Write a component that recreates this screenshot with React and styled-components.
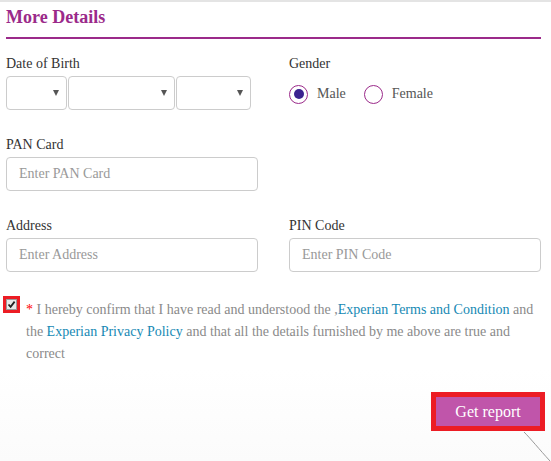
import React from "react";
import styled, { createGlobalStyle } from "styled-components";

const GlobalStyle = createGlobalStyle`
  html, body { margin: 0; padding: 0; background: #ffffff; }
  body { font-family: "Liberation Serif", "Times New Roman", serif; }
  * { box-sizing: border-box; }
`;

const PURPLE = "#9b2a8a";

const Page = styled.div`
  position: relative;
  min-height: 461px;
  overflow: hidden;
  border-top: 2px solid #e4e4e4;
  padding: 0 10px 0 6px;
  background: linear-gradient(180deg, #ffffff 0%, #ffffff 80%, #fbfbfb 100%);
`;

const Title = styled.h2`
  margin: 0;
  padding: 3px 0 8px;
  font-size: 18px;
  line-height: 24px;
  font-weight: bold;
  color: ${PURPLE};
  border-bottom: 2px solid ${PURPLE};
`;

const Grid = styled.div`
  display: grid;
  grid-template-columns: 252px 252px;
  column-gap: 31px;
  row-gap: 25px;
  margin-top: 15px;
`;

const Field = styled.div`
  display: flex;
  flex-direction: column;
`;

const Label = styled.label`
  font-size: 14px;
  line-height: 20px;
  color: #333333;
  margin-bottom: 2px;
`;

const Input = styled.input`
  height: 34px;
  width: 100%;
  border: 1px solid #cccccc;
  border-radius: 4px;
  padding: 0 12px;
  font-family: "Liberation Serif", "Times New Roman", serif;
  font-size: 14px;
  color: #333;
  outline: none;
  background: #fff;
  &::placeholder { color: #999999; }
`;

const SelectRow = styled.div`
  display: flex;
  gap: 1px;
`;

const SelectWrap = styled.div`
  position: relative;
  width: ${(p) => p.$w}px;
  height: 34px;
  &::after {
    content: "";
    position: absolute;
    right: 8px;
    top: 14px;
    border-left: 3.5px solid transparent;
    border-right: 3.5px solid transparent;
    border-top: 6px solid #555555;
    pointer-events: none;
  }
`;

const Select = styled.select`
  appearance: none;
  width: 100%;
  height: 100%;
  border: 1px solid #cccccc;
  border-radius: 4px;
  background: #fff;
  font-family: "Liberation Serif", "Times New Roman", serif;
  font-size: 14px;
  padding: 0 8px;
  outline: none;
`;

const RadioGroup = styled.div`
  display: flex;
  align-items: center;
  height: 34px;
  gap: 18px;
  padding-top: 2px;
`;

const RadioOption = styled.label`
  display: flex;
  align-items: center;
  gap: 9px;
  font-size: 14px;
  color: #555555;
  cursor: pointer;
`;

const RadioCircle = styled.span`
  width: 19px;
  height: 19px;
  border-radius: 50%;
  border: 1.5px solid ${PURPLE};
  display: flex;
  align-items: center;
  justify-content: center;
  background: #fff;
  &::after {
    content: "";
    width: 10px;
    height: 10px;
    border-radius: 50%;
    background: ${(p) => (p.$checked ? "#3b2390" : "transparent")};
  }
`;

const Consent = styled.div`
  display: flex;
  align-items: flex-start;
  gap: 6px;
  margin-top: 24px;
  margin-left: -3px;
`;

const CheckBox = styled.span`
  flex: none;
  width: 17px;
  height: 17px;
  background: #ec1c24;
  display: flex;
  align-items: center;
  justify-content: center;
`;

const CheckInner = styled.span`
  width: 11px;
  height: 11px;
  background: #e9e9e9;
  border: 1px solid #9a9a9a;
  display: flex;
  align-items: center;
  justify-content: center;
`;

const ConsentText = styled.p`
  margin: 0;
  padding-top: 3px;
  font-size: 14px;
  line-height: 22px;
  color: #8a8a8a;
`;

const Star = styled.span`
  color: #ff0000;
`;

const Link = styled.a`
  color: #1689b4;
  text-decoration: none;
`;

const ButtonRow = styled.div`
  display: flex;
  justify-content: flex-end;
  margin-top: 27px;
  margin-right: -4px;
`;

const Button = styled.button`
  width: 114px;
  height: 39px;
  border: 5px solid #ec1c24;
  background: #c055aa;
  color: #ffffff;
  font-family: "Liberation Serif", "Times New Roman", serif;
  font-size: 16px;
  padding: 0;
  cursor: pointer;
`;

const Twig = styled.svg`
  position: absolute;
  right: 0;
  bottom: 0;
  width: 60px;
  height: 70px;
  pointer-events: none;
`;

export default function App() {
  return (
    <>
      <GlobalStyle />
      <Page>
        <Twig viewBox="0 0 60 70">
          <path d="M33 41 C 40 48, 48 58, 59 70" stroke="#9a9a9a" strokeWidth="1" fill="none" />
        </Twig>
        <Title>More Details</Title>
        <Grid>
          <Field>
            <Label>Date of Birth</Label>
            <SelectRow>
              <SelectWrap $w={61}><Select defaultValue=""><option value=""></option></Select></SelectWrap>
              <SelectWrap $w={107}><Select defaultValue=""><option value=""></option></Select></SelectWrap>
              <SelectWrap $w={75}><Select defaultValue=""><option value=""></option></Select></SelectWrap>
            </SelectRow>
          </Field>
          <Field>
            <Label>Gender</Label>
            <RadioGroup>
              <RadioOption>
                <RadioCircle $checked />
                Male
              </RadioOption>
              <RadioOption>
                <RadioCircle />
                Female
              </RadioOption>
            </RadioGroup>
          </Field>
          <Field>
            <Label>PAN Card</Label>
            <Input placeholder="Enter PAN Card" />
          </Field>
          <div />
          <Field>
            <Label>Address</Label>
            <Input placeholder="Enter Address" />
          </Field>
          <Field>
            <Label>PIN Code</Label>
            <Input placeholder="Enter PIN Code" />
          </Field>
        </Grid>
        <Consent>
          <CheckBox>
            <CheckInner>
              <svg width="9" height="9" viewBox="0 0 9 9">
                <path d="M1.5 4.5 L3.6 6.8 L7.6 1.6" stroke="#222" strokeWidth="1.8" fill="none" />
              </svg>
            </CheckInner>
          </CheckBox>
          <ConsentText>
            <Star>*</Star> I hereby confirm that I have read and understood the ,<Link href="#">Experian Terms and Condition</Link> and the <Link href="#">Experian Privacy Policy</Link> and that all the details furnished by me above are true and correct
          </ConsentText>
        </Consent>
        <ButtonRow>
          <Button>Get report</Button>
        </ButtonRow>
      </Page>
    </>
  );
}
